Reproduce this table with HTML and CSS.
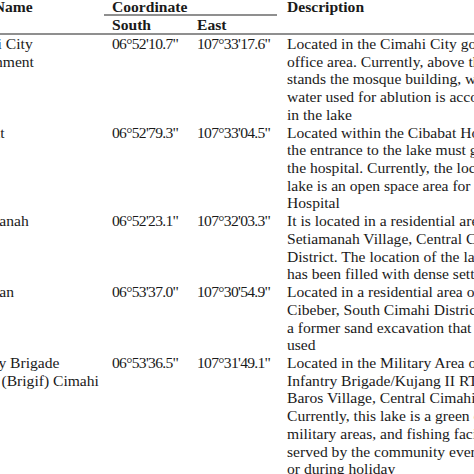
FILE: index.html
```html
<!DOCTYPE html>
<html>
<head>
<meta charset="utf-8">
<link rel="stylesheet" href="styles.css">
</head>
<body>
<table class="lakes">
  <colgroup>
    <col class="c-name">
    <col class="c-south">
    <col class="c-east">
    <col class="c-desc">
  </colgroup>
  <thead>
    <tr>
      <th class="h-name" rowspan="2">Lake Name</th>
      <th class="h-coord" colspan="2">Coordinate</th>
      <th class="h-desc" rowspan="2">Description</th>
    </tr>
    <tr>
      <th class="h-sub">South</th>
      <th class="h-sub">East</th>
    </tr>
  </thead>
  <tbody>
    <tr>
      <td>Cimahi City<br>Government</td>
      <td class="num">06°52'10.7"</td>
      <td class="num">107°33'17.6"</td>
      <td class="desc">Located in the Cimahi City government<br>office area. Currently, above the lake<br>stands the mosque building, while the<br>water used for ablution is accommodated<br>in the lake</td>
    </tr>
    <tr>
      <td>Cibabat</td>
      <td class="num">06°52'79.3"</td>
      <td class="num">107°33'04.5"</td>
      <td class="desc">Located within the Cibabat Hospital, so<br>the entrance to the lake must go through<br>the hospital. Currently, the location of the<br>lake is an open space area for Cibabat<br>Hospital</td>
    </tr>
    <tr>
      <td>Setiamanah</td>
      <td class="num">06°52'23.1"</td>
      <td class="num">107°32'03.3"</td>
      <td class="desc">It is located in a residential area of<br>Setiamanah Village, Central Cimahi<br>District. The location of the lake<br>has been filled with dense settlements</td>
    </tr>
    <tr>
      <td>Ciseupan</td>
      <td class="num">06°53'37.0"</td>
      <td class="num">107°30'54.9"</td>
      <td class="desc">Located in a residential area of<br>Cibeber, South Cimahi District, it is<br>a former sand excavation that is no longer<br>used</td>
    </tr>
    <tr>
      <td>Infantry Brigade<br>Raider (Brigif) Cimahi</td>
      <td class="num">06°53'36.5"</td>
      <td class="num">107°31'49.1"</td>
      <td class="desc">Located in the Military Area of the 15th<br>Infantry Brigade/Kujang II RTD in<br>Baros Village, Central Cimahi District.<br>Currently, this lake is a green open space,<br>military areas, and fishing facilities<br>served by the community every weekend<br>or during holiday</td>
    </tr>
  </tbody>
</table>
</body>
</html>
```

FILE: styles.css
```css
html, body {
  margin: 0;
  padding: 0;
  background: #ffffff;
  overflow: hidden;
  width: 474px;
  height: 474px;
}

.lakes {
  margin-left: -48px;
  margin-top: -1px;
  border-collapse: collapse;
  table-layout: fixed;
  width: 760px;
  font-family: "Liberation Serif", "DejaVu Serif", serif;
  font-size: 15.6px;
  line-height: 17.72px;
  color: #1a1a1a;
}

.c-name { width: 152px; }
.c-south { width: 85px; }
.c-east { width: 88px; }
.c-desc { width: 435px; }

.lakes th,
.lakes td {
  padding: 0 0 0 8px;
  text-align: left;
  vertical-align: top;
  white-space: nowrap;
}

.lakes th {
  font-weight: bold;
  line-height: 17px;
}

.lakes .h-coord,
.lakes .h-name,
.lakes .h-desc {
  line-height: 15px;
}

.lakes td:first-child,
.lakes th.h-name {
  padding-left: 4px;
}

.lakes .num {
  letter-spacing: -0.7px;
}

.lakes .desc,
.lakes .h-desc {
  padding-left: 10px;
}

.h-coord,
.h-sub,
.h-name,
.h-desc {
  border-bottom: 2px solid #8f8f8f;
}
```
